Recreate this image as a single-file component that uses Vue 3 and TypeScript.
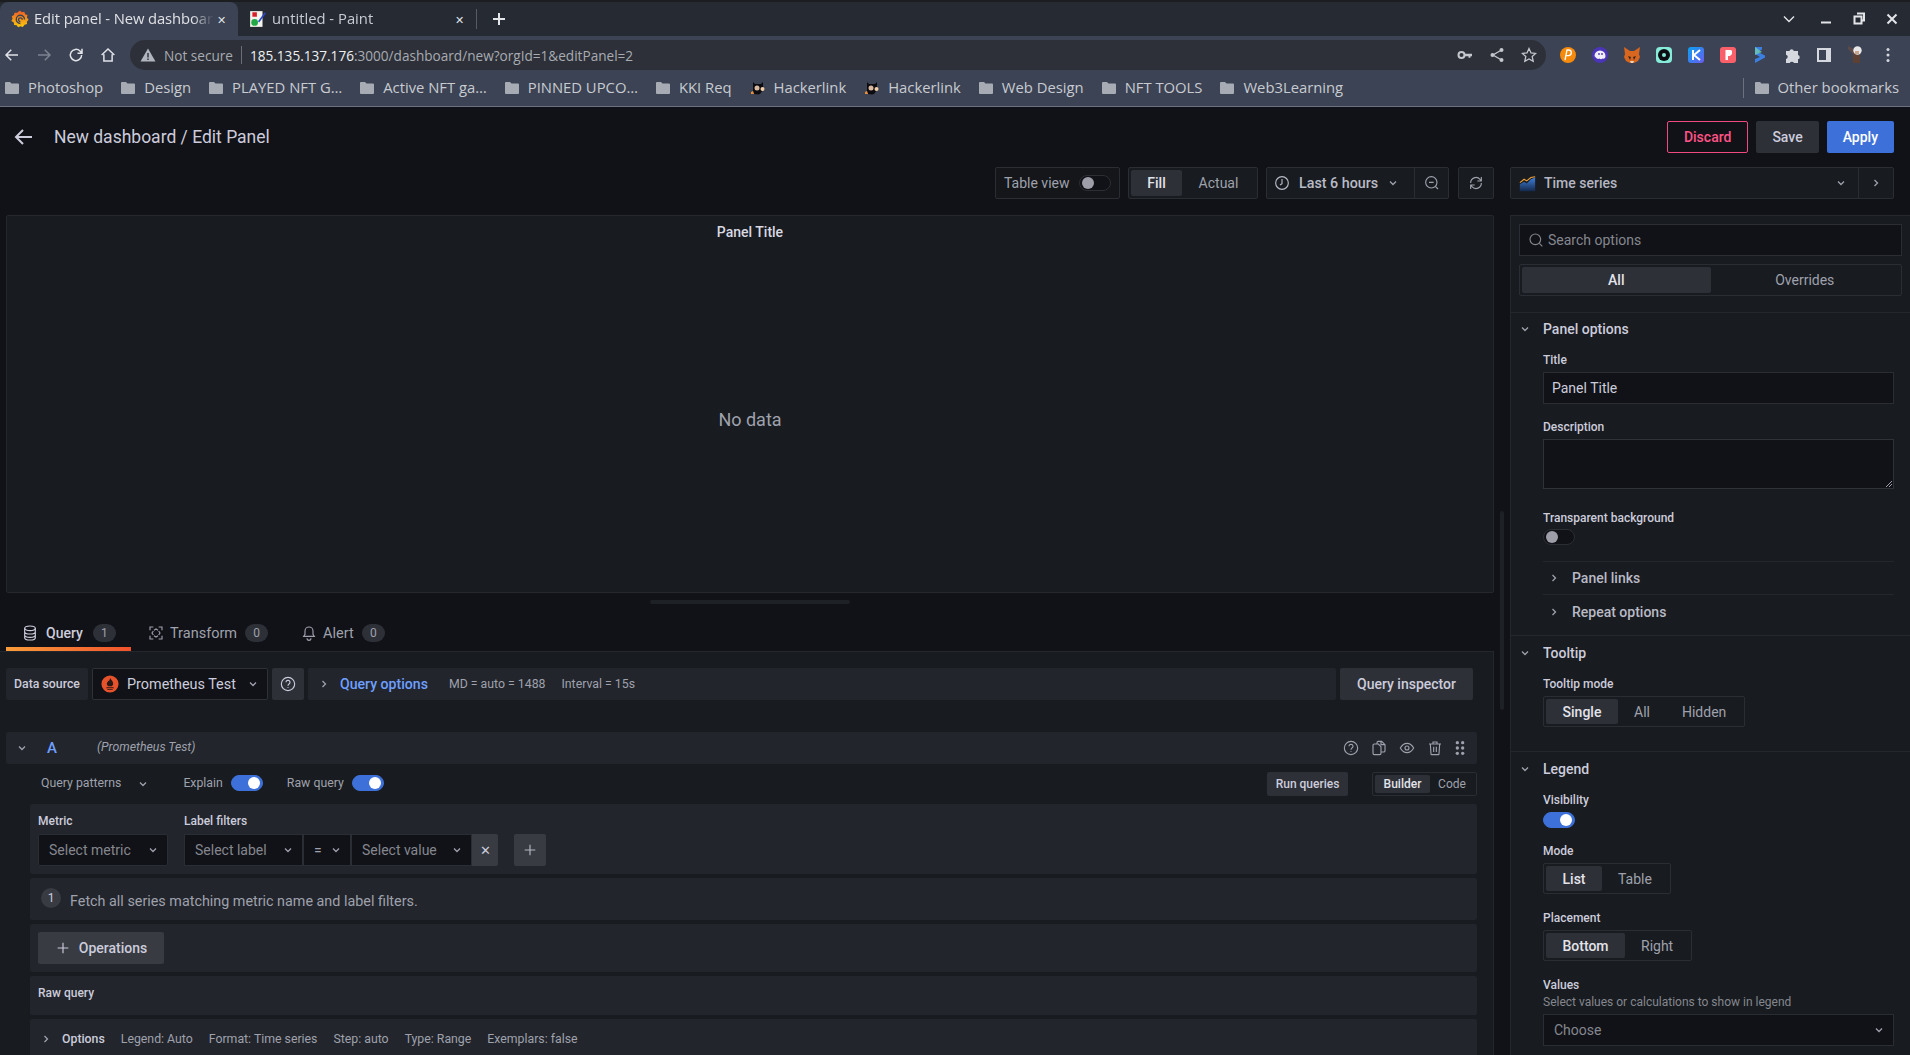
<template>
  <div class="screen">
    <!-- browser chrome -->
    <div class="tabstrip">
      <div class="tab tab--active">
        <svg class="favicon" viewBox="0 0 24 24">
          <defs>
            <linearGradient id="gf" x1="0" y1="0" x2="0" y2="1">
              <stop offset="0" stop-color="#f05a28" />
              <stop offset="1" stop-color="#fbca0a" />
            </linearGradient>
          </defs>
          <path fill="url(#gf)" d="M12 .5l2.400 2.600 3.400-.8 1 3.200 3.200 1.200-.8 3.300 2.300 3-2.400 2.500.4 3.300-3.400.7-2.300 3.100-3.300-.8-3 1.200-2-2.700-3.400-.3-.3-3.400L.5 14.500l1.600-3-1.100-3.200 3-1.500.7-3.300 3.400.2z" />
          <path d="M18 12.500a5.500 5.500 0 1 0-5.500 5.500M15 13a2.500 2.500 0 1 0-2.500 2.500" fill="none" stroke="#3c4354" stroke-width="1.800" />
        </svg>
        <span class="tab-title">Edit panel - New dashboar</span>
        <span class="tab-close">✕</span>
      </div>
      <div class="tab">
        <svg class="favicon" viewBox="0 0 16 16">
          <rect x="1" y="1" width="11" height="14" fill="#f4f4ee" />
          <rect x="3" y="2" width="4" height="4" fill="#d8202a" />
          <circle cx="5" cy="11" r="3" fill="#23a848" />
          <path d="M8 10l6-8 1 1-6 8z" fill="#2c46c8" />
        </svg>
        <span class="tab-title tab-title--dim">untitled - Paint</span>
        <span class="tab-close">✕</span>
      </div>
      <div class="tab-sep" />
      <svg class="new-tab" viewBox="0 0 14 14"><path d="M7 1v12M1 7h12" /></svg>
      <div class="win-controls">
        <svg class="win-down" viewBox="0 0 14 14"><path d="M2 4.500l5 5 5-5" /></svg>
        <svg class="win-ico" viewBox="0 0 14 14"><path d="M2 10.500h10" stroke-width="2" /></svg>
        <svg class="win-ico" viewBox="0 0 14 14"><path d="M5 1.500h7v7h-2M2.500 4.500h7v7h-7z" stroke-width="2" /></svg>
        <svg class="win-ico" viewBox="0 0 14 14"><path d="M2.500 2.500l9 9M11.500 2.500l-9 9" stroke-width="2" /></svg>
      </div>
    </div>

    <div class="toolbar">
      <div class="nav-btns">
        <svg viewBox="0 0 24 24"><path d="M20 12H5M11 5l-7 7 7 7" /></svg>
        <svg class="nav-off" viewBox="0 0 24 24"><path d="M4 12h15M13 5l7 7-7 7" /></svg>
        <svg viewBox="0 0 24 24"><path d="M19.500 12a7.500 7.500 0 1 1-2.200-5.300L20 9.500M20 3.500v6h-6" /></svg>
        <svg viewBox="0 0 24 24"><path d="M3.500 12L12 4l8.500 8M6.500 11v9h11v-9" /></svg>
      </div>
      <div class="omnibox">
        <svg class="warn" viewBox="0 0 16 16"><path d="M8 1.500L15.500 14.500H.5z" fill="#b1b5bd" /><path d="M8 6v4.500M8 11.500v1.500" stroke="#2d3038" stroke-width="1.400" /></svg>
        <span class="not-secure">Not secure</span>
        <span class="omni-sep" />
        <span class="url"><b>185.135.137.176</b>:3000/dashboard/new?orgId=1&amp;editPanel=2</span>
        <div class="omni-icons">
          <svg viewBox="0 0 16 16"><circle cx="4.500" cy="8" r="3" fill="none" stroke="#c4c7cd" stroke-width="2" /><path d="M7 6.800h8v2.500h-1.500v1.500h-2V9.300H7z" fill="#c4c7cd" /></svg>
          <svg viewBox="0 0 16 16"><path d="M12.500 3L4 8l8.500 5" fill="none" stroke="#c4c7cd" stroke-width="1.300" /><circle cx="12.500" cy="3" r="2" fill="#c4c7cd" /><circle cx="3.500" cy="8" r="2" fill="#c4c7cd" /><circle cx="12.500" cy="13" r="2" fill="#c4c7cd" /></svg>
          <svg viewBox="0 0 16 16"><path d="M8 1.500l2 4.400 4.700.5-3.500 3.200 1 4.700L8 11.900l-4.200 2.400 1-4.700L1.300 6.400 6 5.900z" fill="none" stroke="#c4c7cd" stroke-width="1.300" /></svg>
        </div>
      </div>
      <div class="extensions">
        <svg viewBox="0 0 20 20"><circle cx="10" cy="10" r="8" fill="#f68a0c" /><path d="M7 15l2-10h1.500a2.800 2.800 0 0 1 0 5.600H8.500" fill="none" stroke="#fff" stroke-width="1.300" /></svg>
        <svg viewBox="0 0 20 20"><circle cx="10" cy="10" r="8" fill="#4b35b8" /><path d="M4.500 11a5.500 5.500 0 0 1 11 0c0 2.500-1.500 3-3 2.500-1 1-2 1-3 0-1 .8-3 .5-5-2.500z" fill="#f2eefc" /><circle cx="9" cy="9" r=".9" fill="#4b35b8" /><circle cx="12" cy="9" r=".9" fill="#4b35b8" /></svg>
        <svg viewBox="0 0 20 20"><path d="M2 2l6 4h4l6-4-1 7 1 3-2 4-4 2H8l-4-2-2-4 1-3z" fill="#d9661f" /><path d="M6 11l3 1-1 3zM14 11l-3 1 1 3z" fill="#33261e" /><path d="M8 16h4l-1 2H9z" fill="#e8d6c2" /></svg>
        <svg viewBox="0 0 20 20"><rect x="2" y="2" width="16" height="16" rx="4" fill="#86ecd9" /><circle cx="10" cy="10" r="6" fill="#0b0f14" /><circle cx="10" cy="10" r="2" fill="#86ecd9" /></svg>
        <svg viewBox="0 0 20 20"><defs><linearGradient id="kk" x1="0" y1="0" x2="1" y2="1"><stop offset="0" stop-color="#0aa2ee" /><stop offset="1" stop-color="#6a5cf0" /></linearGradient></defs><rect x="2" y="2" width="16" height="16" rx="3" fill="url(#kk)" /><path d="M7 5v10M14 5l-6 5 6 5" fill="none" stroke="#fff" stroke-width="2" /></svg>
        <svg viewBox="0 0 20 20"><rect x="2" y="2" width="16" height="16" rx="3" fill="#f9606a" /><path d="M7.500 15V5H13l1 1v3l-2 2H10v4z" fill="#fff" /></svg>
        <svg viewBox="0 0 20 20"><path d="M5 2h7v2.500L8 7l7 3.500v2L5 18v-4l5-2-5-3z" fill="#3b7fe0" /><path d="M5 2l7 5-7 3z" fill="#6ecdb6" opacity=".8" /></svg>
        <svg viewBox="0 0 20 20"><path d="M4 6h3.500a2.200 2.200 0 0 1 4.300 0H16v4a2.200 2.200 0 0 1 0 4.300V18h-4a2.300 2.300 0 0 0-4.200 0H4v-4a2.200 2.200 0 0 0 0-4.300z" fill="#d5d8df" /></svg>
        <svg viewBox="0 0 20 20"><rect x="3" y="3" width="14" height="14" fill="#d5d8df" /><rect x="5" y="5" width="7" height="10" fill="#3c4354" /></svg>
        <svg viewBox="0 0 20 20"><path d="M2 1l6 3 1 4-2 1-5-5z" fill="#5c4a48" /><rect x="7" y="9" width="7" height="9" fill="#5b4033" /><circle cx="11.500" cy="5.500" r="4.200" fill="#e8e8ea" /><rect x="9" y="6" width="4" height="3" fill="#c9a58c" /></svg>
        <svg viewBox="0 0 20 20"><circle cx="10" cy="4.500" r="1.500" fill="#d5d8df" /><circle cx="10" cy="10" r="1.500" fill="#d5d8df" /><circle cx="10" cy="15.500" r="1.500" fill="#d5d8df" /></svg>
      </div>
    </div>

    <div class="bookmarks">
      <div v-for="b in bookmarks" :key="b.id" class="bookmark">
        <svg v-if="b.cat" class="cat" viewBox="0 0 16 16"><path d="M3 2l2 2h6l2-2v8l-3 4-2 .5L4 14l-1-3z" fill="#0c0c10" /><circle cx="7" cy="8" r="2.500" fill="#d9b8a0" /><circle cx="12.500" cy="9" r="2" fill="#f3cfa8" /><path d="M1 12l2-1 1 3H1z" fill="#e98f3c" /></svg>
        <svg v-else class="folder" viewBox="0 0 14 12"><path d="M0 1a1 1 0 0 1 1-1h4l1.500 1.500H13a1 1 0 0 1 1 1V11a1 1 0 0 1-1 1H1a1 1 0 0 1-1-1z" /></svg>
        <span>{{ b.label }}</span>
      </div>
      <div class="bm-right">
        <span class="bm-sep" />
        <div class="bookmark">
          <svg class="folder" viewBox="0 0 14 12"><path d="M0 1a1 1 0 0 1 1-1h4l1.500 1.500H13a1 1 0 0 1 1 1V11a1 1 0 0 1-1 1H1a1 1 0 0 1-1-1z" /></svg>
          <span>Other bookmarks</span>
        </div>
      </div>
    </div>

    <!-- grafana page -->
    <div class="page">
      <header class="page-head">
        <svg class="back" viewBox="0 0 24 24"><path d="M20 12H5M11 5l-7 7 7 7" /></svg>
        <h1>New dashboard / Edit Panel</h1>
        <div class="head-actions">
          <button class="btn btn--outline">Discard</button>
          <button class="btn btn--grey">Save</button>
          <button class="btn btn--blue">Apply</button>
        </div>
      </header>

      <div class="editor">
        <section class="left">
          <div class="view-bar">
            <div class="tb-box tb-table">
              <span>Table view</span>
              <span class="switch" />
            </div>
            <div class="seg seg--bar">
              <span class="seg-item seg-item--on seg-fill">Fill</span>
              <span class="seg-item seg-actual">Actual</span>
            </div>
            <div class="tb-box tb-time">
              <div class="tb-time-main">
                <svg class="ico16" viewBox="0 0 24 24"><circle cx="12" cy="12" r="9.500" /><path d="M12 6v7l-3 2" /></svg>
                <span>Last 6 hours</span>
                <svg class="chev" viewBox="0 0 12 12"><path d="M3 4.500L6 7.500 9 4.500" /></svg>
              </div>
              <div class="tb-time-zoom">
                <svg class="ico16" viewBox="0 0 24 24"><circle cx="11" cy="11" r="8.500" /><path d="M7.500 11h7M17 17l4 4" /></svg>
              </div>
            </div>
            <div class="tb-box tb-refresh">
              <svg class="ico16" viewBox="0 0 24 24"><path d="M4 12a8 8 0 0 1 14-5.500L20 9M20 3v6h-6M20 12a8 8 0 0 1-14 5.500L4 15M4 21v-6h6" /></svg>
            </div>
          </div>

          <div class="panel">
            <div class="panel-title">Panel Title</div>
            <div class="panel-empty">No data</div>
          </div>

          <div class="splitter"><span /></div>

          <div class="q-tabs">
            <div class="q-tab q-tab--on">
              <svg class="ico16" viewBox="0 0 24 24"><ellipse cx="12" cy="5" rx="8" ry="3.500" /><path d="M4 5v14c0 2 3.500 3.500 8 3.500s8-1.500 8-3.500V5M4 10c0 2 3.500 3.500 8 3.500s8-1.500 8-3.500M4 15c0 2 3.500 3.500 8 3.500s8-1.500 8-3.500" /></svg>
              <span>Query</span>
              <span class="count">1</span>
            </div>
            <div class="q-tab q-tab--transform">
              <svg class="ico16" viewBox="0 0 24 24"><path d="M3 8V3h5M16 3h5v5M21 16v5h-5M8 21H3v-5M9 8l3-2 3 2M16 9l2 3-2 3M15 16l-3 2-3-2M8 15l-2-3 2-3" /></svg>
              <span>Transform</span>
              <span class="count">0</span>
            </div>
            <div class="q-tab q-tab--alert">
              <svg class="ico16" viewBox="0 0 24 24"><path d="M12 3a6 6 0 0 0-6 6v5l-2 3h16l-2-3V9a6 6 0 0 0-6-6zM9 20a3 3 0 0 0 6 0" /></svg>
              <span>Alert</span>
              <span class="count">0</span>
            </div>
          </div>

          <div class="q-pane">
            <div class="ds-row">
              <span class="ds-label">Data source</span>
              <div class="ds-select">
                <svg class="prom" viewBox="0 0 20 20"><circle cx="10" cy="10" r="9.500" fill="#e6522c" /><path d="M10 3c1 2.500 3.500 3.500 3.500 6.500 0 1.500-.8 2.500-1.500 3H8c-.7-.5-1.500-1.500-1.500-3C6.500 8 8 8 8 6.500 9 7 10 5 10 3z" fill="#2a1a16" /><path d="M6 13.500h8v1.200H6zM7 15.700h6v1H7z" fill="#2a1a16" /></svg>
                <span>Prometheus Test</span>
                <svg class="chev" viewBox="0 0 12 12"><path d="M3 4.500L6 7.500 9 4.500" /></svg>
              </div>
              <div class="ds-help">
                <svg class="ico16" viewBox="0 0 24 24"><circle cx="12" cy="12" r="10" /><path d="M9 9.500a3 3 0 1 1 4.500 2.600c-1 .6-1.500 1-1.500 2.400M12 17v1" /></svg>
              </div>
              <div class="ds-options">
                <svg class="chev chev--right" viewBox="0 0 12 12"><path d="M4.500 3L7.500 6 4.500 9" /></svg>
                <span class="ds-options-title">Query options</span>
                <span class="ds-meta">MD = auto = 1488</span>
                <span class="ds-meta">Interval = 15s</span>
              </div>
              <button class="btn btn--grey btn--inspector">Query inspector</button>
            </div>

            <div class="q-head">
              <svg class="chev" viewBox="0 0 12 12"><path d="M3 4.500L6 7.500 9 4.500" /></svg>
              <span class="q-letter">A</span>
              <span class="q-ds">(Prometheus Test)</span>
              <div class="q-head-icons">
                <svg viewBox="0 0 24 24"><circle cx="12" cy="12" r="10" /><path d="M9 9.500a3 3 0 1 1 4.500 2.600c-1 .6-1.500 1-1.500 2.400M12 17v1" /></svg>
                <svg viewBox="0 0 24 24"><path d="M9 6V4a2 2 0 0 1 2-2h5l5 5v9a2 2 0 0 1-2 2h-3M15 2v5h6M5 6h6l4 4v10a2 2 0 0 1-2 2H5a2 2 0 0 1-2-2V8a2 2 0 0 1 2-2z" /></svg>
                <svg viewBox="0 0 24 24"><path d="M2 12c2.500-4.500 6-7 10-7s7.500 2.500 10 7c-2.500 4.500-6 7-10 7s-7.500-2.500-10-7z" /><circle cx="12" cy="12" r="3" /></svg>
                <svg viewBox="0 0 24 24"><path d="M3 6h18M9 6V3h6v3M5 6l1 15a1 1 0 0 0 1 1h10a1 1 0 0 0 1-1l1-15M10 10v8M14 10v8" /></svg>
                <svg class="drag" viewBox="0 0 24 24"><circle cx="8" cy="4" r="2.500" /><circle cx="16" cy="4" r="2.500" /><circle cx="8" cy="12" r="2.500" /><circle cx="16" cy="12" r="2.500" /><circle cx="8" cy="20" r="2.500" /><circle cx="16" cy="20" r="2.500" /></svg>
              </div>
            </div>

            <div class="q-tools">
              <span class="q-patterns">Query patterns</span>
              <svg class="chev" viewBox="0 0 12 12"><path d="M3 4.500L6 7.500 9 4.500" /></svg>
              <span class="q-explain">Explain</span>
              <span class="switch switch--on" />
              <span class="q-raw">Raw query</span>
              <span class="switch switch--on" />
              <button class="btn btn--grey btn--run">Run queries</button>
              <div class="seg seg--small">
                <span class="seg-item seg-item--on seg-builder">Builder</span>
                <span class="seg-item seg-code">Code</span>
              </div>
            </div>

            <div class="qb">
              <div class="qb-row qb-row--filters">
                <div class="qb-field">
                  <label>Metric</label>
                  <div class="select qb-metric">
                    <span>Select metric</span>
                    <svg class="chev" viewBox="0 0 12 12"><path d="M3 4.500L6 7.500 9 4.500" /></svg>
                  </div>
                </div>
                <div class="qb-field">
                  <label>Label filters</label>
                  <div class="qb-filters">
                    <div class="select qb-label">
                      <span>Select label</span>
                      <svg class="chev" viewBox="0 0 12 12"><path d="M3 4.500L6 7.500 9 4.500" /></svg>
                    </div>
                    <div class="select qb-op">
                      <span>=</span>
                      <svg class="chev" viewBox="0 0 12 12"><path d="M3 4.500L6 7.500 9 4.500" /></svg>
                    </div>
                    <div class="select qb-value">
                      <span>Select value</span>
                      <svg class="chev" viewBox="0 0 12 12"><path d="M3 4.500L6 7.500 9 4.500" /></svg>
                    </div>
                    <div class="qb-x">✕</div>
                    <div class="qb-plus">
                      <svg class="ico16" viewBox="0 0 24 24"><path d="M12 4v16M4 12h16" /></svg>
                    </div>
                  </div>
                </div>
              </div>
              <div class="qb-row qb-row--hint">
                <span class="hint-num">1</span>
                <span>Fetch all series matching metric name and label filters.</span>
              </div>
              <div class="qb-row qb-row--ops">
                <button class="btn btn--grey btn--ops">
                  <svg class="ico16" viewBox="0 0 24 24"><path d="M12 4v16M4 12h16" /></svg>
                  Operations
                </button>
              </div>
              <div class="qb-row qb-row--raw">Raw query</div>
              <div class="qb-row qb-row--opts">
                <svg class="chev" viewBox="0 0 12 12"><path d="M4.500 3L7.500 6 4.500 9" /></svg>
                <strong>Options</strong>
                <span v-for="o in queryOpts" :key="o">{{ o }}</span>
              </div>
            </div>
          </div>
        </section>

        <div class="gutter"><span /></div>

        <aside class="right">
          <div class="viz-picker">
            <div class="viz-main">
              <svg class="viz-ico" viewBox="0 0 20 20">
                <defs>
                  <linearGradient id="ts" x1="0" y1="0" x2="0" y2="1">
                    <stop offset="0" stop-color="#3f7fd8" />
                    <stop offset="1" stop-color="#14294d" />
                  </linearGradient>
                </defs>
                <path d="M1 11l5-3 3 2 5-5 5-2v16H1z" fill="url(#ts)" />
                <path d="M1 9l5-4 3 2 5-4 5-1" fill="none" stroke="#f2a33a" stroke-width="1.200" />
              </svg>
              <span>Time series</span>
              <svg class="chev" viewBox="0 0 12 12"><path d="M3 4.500L6 7.500 9 4.500" /></svg>
            </div>
            <div class="viz-toggle">
              <svg class="chev" viewBox="0 0 12 12"><path d="M4.500 3L7.500 6 4.500 9" /></svg>
            </div>
          </div>

          <div class="opts">
            <div class="opts-top">
              <div class="search">
                <svg class="ico16" viewBox="0 0 24 24"><circle cx="11" cy="11" r="8" /><path d="M17 17l4.500 4.500" /></svg>
                <span>Search options</span>
              </div>
              <div class="seg seg--wide">
                <span class="seg-item seg-item--on">All</span>
                <span class="seg-item">Overrides</span>
              </div>
            </div>

            <div class="group group--panel">
              <div class="group-title group-title--first">
                <svg class="chev" viewBox="0 0 12 12"><path d="M3 4.500L6 7.500 9 4.500" /></svg>
                Panel options
              </div>
              <label class="f-label f-label--title">Title</label>
              <div class="input">Panel Title</div>
              <label class="f-label f-label--desc">Description</label>
              <div class="textarea">
                <svg class="grip" viewBox="0 0 8 8"><path d="M7 1L1 7M7 4L4 7" /></svg>
              </div>
              <label class="f-label f-label--transp">Transparent background</label>
              <span class="switch switch--block" />
              <div class="sub sub--first">
                <svg class="chev" viewBox="0 0 12 12"><path d="M4.500 3L7.500 6 4.500 9" /></svg>
                Panel links
              </div>
              <div class="sub">
                <svg class="chev" viewBox="0 0 12 12"><path d="M4.500 3L7.500 6 4.500 9" /></svg>
                Repeat options
              </div>
            </div>

            <div class="group group--tooltip">
              <div class="group-title">
                <svg class="chev" viewBox="0 0 12 12"><path d="M3 4.500L6 7.500 9 4.500" /></svg>
                Tooltip
              </div>
              <label class="f-label">Tooltip mode</label>
              <div class="seg seg--radio">
                <span class="seg-item seg-item--on r-single">Single</span>
                <span class="seg-item r-all">All</span>
                <span class="seg-item r-hidden">Hidden</span>
              </div>
            </div>

            <div class="group group--legend">
              <div class="group-title">
                <svg class="chev" viewBox="0 0 12 12"><path d="M3 4.500L6 7.500 9 4.500" /></svg>
                Legend
              </div>
              <label class="f-label">Visibility</label>
              <span class="switch switch--on switch--block" />
              <label class="f-label f-label--mode">Mode</label>
              <div class="seg seg--radio">
                <span class="seg-item seg-item--on r-list">List</span>
                <span class="seg-item r-table">Table</span>
              </div>
              <label class="f-label f-label--place">Placement</label>
              <div class="seg seg--radio">
                <span class="seg-item seg-item--on r-bottom">Bottom</span>
                <span class="seg-item r-right">Right</span>
              </div>
              <label class="f-label f-label--values">Values</label>
              <div class="f-desc">Select values or calculations to show in legend</div>
              <div class="input input--select">
                <span>Choose</span>
                <svg class="chev" viewBox="0 0 12 12"><path d="M3 4.500L6 7.500 9 4.500" /></svg>
              </div>
            </div>
          </div>
        </aside>
      </div>
    </div>
  </div>
</template>

<script setup lang="ts">
interface Bookmark {
  id: number
  label: string
  cat?: boolean
}

const bookmarks: Bookmark[] = [
  { id: 1, label: 'Photoshop' },
  { id: 2, label: 'Design' },
  { id: 3, label: 'PLAYED NFT G…' },
  { id: 4, label: 'Active NFT ga…' },
  { id: 5, label: 'PINNED UPCO…' },
  { id: 6, label: 'KKI Req' },
  { id: 7, label: 'Hackerlink', cat: true },
  { id: 8, label: 'Hackerlink', cat: true },
  { id: 9, label: 'Web Design' },
  { id: 10, label: 'NFT TOOLS' },
  { id: 11, label: 'Web3Learning' }
]

const queryOpts = ['Legend: Auto', 'Format: Time series', 'Step: auto', 'Type: Range', 'Exemplars: false']
</script>

<style>
html,
body {
  margin: 0;
  background: #111217;
  overflow: hidden;
}
</style>

<style scoped>
.screen {
  width: 1910px;
  height: 1055px;
  overflow: hidden;
  background: #111217;
  font-family: Roboto, "Liberation Sans", sans-serif;
  font-size: 14px;
  color: #ccccdc;
  display: flex;
  flex-direction: column;
}

button {
  font-family: inherit;
  border: none;
}

svg {
  flex-shrink: 0;
}

/* browser chrome */
.tabstrip {
  height: 34px;
  border-top: 2px solid #1c1d20;
  background: #262a33;
  display: flex;
  align-items: center;
  font-family: "Open Sans", "Noto Sans", sans-serif;
  font-size: 14.8px;
  color: #dfe1e5;
}

.tab {
  width: 238px;
  height: 100%;
  box-sizing: border-box;
  padding: 0 10px 0 11px;
  display: flex;
  align-items: center;
}

.tab--active {
  background: #3c4354;
  border-radius: 8px 8px 0 0;
}

.tab--active .tab-title {
  letter-spacing: -0.1px;
}

.favicon {
  width: 18px;
  height: 18px;
  margin-right: 5px;
}

.tab-title {
  flex: 1;
  overflow: hidden;
  white-space: nowrap;
  margin-top: -2px;
  -webkit-mask-image: linear-gradient(to right, #000 88%, transparent);
  mask-image: linear-gradient(to right, #000 88%, transparent);
}

.tab-title--dim {
  color: #c8cbd1;
}

.tab-close {
  font-size: 11px;
  width: 14px;
  text-align: center;
}

.tab-sep {
  width: 1px;
  height: 20px;
  background: #565b66;
}

.new-tab {
  width: 14px;
  height: 14px;
  margin-left: 15px;
  fill: none;
  stroke: #e3e5e9;
  stroke-width: 2;
}

.win-controls {
  margin-left: auto;
  display: flex;
  align-items: center;
  gap: 19px;
  padding-right: 11px;
}

.win-controls svg {
  width: 14px;
  height: 14px;
  fill: none;
  stroke: #e3e5e9;
}

.win-down {
  margin-right: 4px;
  stroke-width: 1.4;
}

.toolbar {
  height: 34px;
  background: #3c4354;
  display: flex;
  align-items: flex-end;
  font-family: "Open Sans", "Noto Sans", sans-serif;
  font-size: 13.6px;
}

.nav-btns {
  width: 130px;
  height: 30px;
  box-sizing: border-box;
  padding-left: 3px;
  display: flex;
  align-items: center;
  gap: 14px;
}

.nav-btns svg {
  width: 18px;
  height: 18px;
  fill: none;
  stroke: #dfe2e8;
  stroke-width: 2;
}

.nav-btns .nav-off {
  stroke: #7c8290;
}

.omnibox {
  width: 1416px;
  height: 30px;
  box-sizing: border-box;
  padding: 0 9px 0 10px;
  border-radius: 15px;
  background: #2d3038;
  display: flex;
  align-items: center;
}

.warn {
  width: 16px;
  height: 16px;
  margin-right: 8px;
}

.not-secure {
  color: #a8abb2;
}

.omni-sep {
  width: 1px;
  height: 18px;
  margin: 0 8px;
  background: #6a6e77;
}

.url {
  color: #a8abb2;
}

.url b {
  color: #eef0f3;
  font-weight: 400;
}

.omni-icons {
  margin-left: auto;
  display: flex;
  gap: 16px;
}

.omni-icons svg {
  width: 16px;
  height: 16px;
}

.extensions {
  height: 30px;
  padding-left: 12px;
  display: flex;
  align-items: center;
  gap: 12px;
}

.extensions svg {
  width: 20px;
  height: 20px;
}

.bookmarks {
  height: 36px;
  background: #3c4354;
  border-bottom: 1px solid #6b7180;
  display: flex;
  align-items: center;
  padding-left: 5px;
  gap: 18px;
  font-family: "Open Sans", "Noto Sans", sans-serif;
  font-size: 14.8px;
  color: #c8cbd1;
}

.bookmark {
  display: flex;
  align-items: center;
  gap: 9px;
  white-space: nowrap;
}

.bookmark span {
  margin-top: -2px;
}

.folder {
  width: 14px;
  height: 12px;
  fill: #a7abb3;
}

.cat {
  width: 16px;
  height: 16px;
  margin-right: -1px;
}

.bm-right {
  margin-left: auto;
  display: flex;
  align-items: center;
  padding-right: 11px;
}

.bm-sep {
  width: 1px;
  height: 20px;
  background: #6b7180;
  margin-right: 11px;
}

/* grafana page */
.page {
  flex: 1;
  min-height: 0;
  display: flex;
  flex-direction: column;
}

.page-head {
  height: 32px;
  padding: 14px 16px 14px 12px;
  display: flex;
  align-items: center;
}

.back {
  width: 24px;
  height: 24px;
  margin-right: 18px;
  fill: none;
  stroke: #ccccdc;
  stroke-width: 2;
}

h1 {
  margin: 0;
  font-size: 17.5px;
  font-weight: 400;
  color: #ccccdc;
}

.head-actions {
  margin-left: auto;
  display: flex;
  gap: 8px;
}

.btn {
  height: 32px;
  padding: 0 16px;
  border-radius: 2px;
  font-size: 14px;
  font-weight: 500;
  display: flex;
  align-items: center;
  white-space: nowrap;
}

.btn--outline {
  background: transparent;
  border: 1px solid #f0497f;
  color: #ff5286;
}

.btn--grey {
  background: #2d3037;
  color: #ccccdc;
}

.btn--blue {
  background: #3d71d9;
  color: #fff;
}

.editor {
  flex: 1;
  min-height: 0;
  display: flex;
}

.left {
  width: 1494px;
  flex-shrink: 0;
  display: flex;
  flex-direction: column;
}

.gutter {
  width: 16px;
  padding-top: 344px;
  box-sizing: border-box;
  display: flex;
  justify-content: center;
  flex-shrink: 0;
}

.gutter span {
  width: 4px;
  height: 199px;
  border-radius: 2px;
  background: #1e2125;
}

.view-bar {
  height: 32px;
  display: flex;
  justify-content: flex-end;
  gap: 8px;
  color: #9fa1ad;
}

.tb-box {
  box-sizing: border-box;
  height: 32px;
  border: 1px solid #2a2d33;
  border-radius: 2px;
  background: #181b1f;
  display: flex;
  align-items: center;
}

.tb-table {
  width: 125px;
  padding: 0 8px;
  justify-content: space-between;
  background: #14161a;
}

.switch {
  width: 32px;
  height: 16px;
  box-sizing: border-box;
  border: 1px solid #2b2e33;
  border-radius: 8px;
  background: #111217;
  display: inline-block;
  position: relative;
}

.switch::after {
  content: "";
  width: 12px;
  height: 12px;
  border-radius: 50%;
  background: #9d9ea8;
  position: absolute;
  left: 2px;
  top: 1px;
}

.switch--on {
  background: #3d71d9;
  border-color: #3d71d9;
}

.switch--on::after {
  left: auto;
  right: 2px;
  background: #fff;
}

.switch--block {
  display: block;
}

.seg {
  box-sizing: border-box;
  border: 1px solid #2a2d33;
  border-radius: 2px;
  padding: 2px;
  display: flex;
  color: #9fa1ad;
}

.seg--bar {
  width: 130px;
  height: 32px;
  background: #181b1f;
}

.seg-item {
  display: flex;
  align-items: center;
  justify-content: center;
  border-radius: 2px;
}

.seg-item--on {
  background: #2d3037;
  color: #e3e3ea;
  font-weight: 500;
}

.seg-fill {
  width: 51px;
}

.seg-actual {
  flex: 1;
}

.tb-time {
  width: 183px;
}

.tb-time-main {
  width: 148px;
  height: 100%;
  box-sizing: border-box;
  padding: 0 8px 0 7px;
  display: flex;
  align-items: center;
  gap: 9px;
  border-right: 1px solid #2a2d33;
  color: #b9bbc7;
  font-size: 14.3px;
  font-weight: 500;
}

.tb-time-main .chev {
  margin-left: 0;
}

.tb-time-zoom {
  flex: 1;
  display: flex;
  justify-content: center;
}

.tb-refresh {
  width: 36px;
  margin-left: 1px;
  justify-content: center;
}

.ico16 {
  width: 16px;
  height: 16px;
  fill: none;
  stroke: currentColor;
  stroke-width: 1.7;
}

.chev {
  width: 12px;
  height: 12px;
  fill: none;
  stroke: #9fa1ad;
  stroke-width: 1.3;
}

.panel {
  height: 378px;
  margin: 16px 0 0 6px;
  box-sizing: border-box;
  border: 1px solid #24272c;
  border-radius: 2px;
  background: #181b1f;
  display: flex;
  flex-direction: column;
  flex-shrink: 0;
}

.panel-title {
  height: 32px;
  display: flex;
  align-items: center;
  justify-content: center;
  font-weight: 500;
  color: #d8d9e3;
}

.panel-empty {
  flex: 1;
  display: flex;
  align-items: center;
  justify-content: center;
  padding-bottom: 2px;
  font-size: 18px;
  color: #9fa1ad;
}

.splitter {
  height: 19px;
  padding-top: 7px;
  box-sizing: border-box;
  display: flex;
  justify-content: center;
  padding-left: 6px;
  flex-shrink: 0;
}

.splitter span {
  width: 200px;
  height: 4px;
  border-radius: 2px;
  background: #1e2125;
}

.q-tabs {
  height: 39px;
  padding-left: 6px;
  display: flex;
  color: #9fa1ad;
  flex-shrink: 0;
}

.q-tab {
  display: flex;
  align-items: center;
  gap: 6px;
  box-sizing: border-box;
  padding-top: 3px;
}

.q-tab--on {
  width: 125px;
  padding-left: 16px;
  padding-top: 7px;
  gap: 8px;
  color: #ccccdc;
  font-weight: 500;
  border-bottom: 4px solid transparent;
  border-image: linear-gradient(90deg, #f99d3a, #f0522c) 1;
}

.q-tab--transform {
  margin-left: 17px;
  gap: 6px;
  font-size: 14.500px;
}

.q-tab--alert {
  margin-left: 33px;
  font-size: 14.500px;
}

.q-tab .count {
  margin-left: 2px;
}

.count {
  width: 23px;
  height: 18px;
  border-radius: 9px;
  background: #2d3037;
  font-size: 12px;
  font-weight: 400;
  display: flex;
  align-items: center;
  justify-content: center;
  color: #9fa1ad;
}

.q-pane {
  flex: 1;
  min-height: 0;
  background: #181b1f;
  border: 1px solid #24272c;
  border-width: 1px 1px 0 0;
  padding: 16px 16px 0 6px;
}

.ds-row {
  height: 32px;
  display: flex;
  gap: 4px;
  padding-right: 4px;
}

.ds-label {
  width: 82px;
  border-radius: 2px;
  background: #22252b;
  display: flex;
  align-items: center;
  justify-content: center;
  font-size: 12.3px;
  font-weight: 500;
}

.ds-select {
  width: 176px;
  box-sizing: border-box;
  border: 1px solid #2e3136;
  border-radius: 2px;
  background: #111217;
  padding: 0 8px;
  display: flex;
  align-items: center;
  font-size: 14.4px;
}

.prom {
  width: 18px;
  height: 18px;
  margin-right: 8px;
}

.ds-select .chev {
  margin-left: auto;
}

.ds-help {
  width: 32px;
  border-radius: 2px;
  background: #2d3037;
  display: flex;
  align-items: center;
  justify-content: center;
}

.ds-options {
  flex: 1;
  border-radius: 2px;
  background: #22252b;
  padding-left: 10px;
  display: flex;
  align-items: center;
  font-size: 12.3px;
  color: #9fa1ad;
}

.ds-options-title {
  margin: 0 21px 0 10px;
  font-size: 14.1px;
  font-weight: 500;
  color: #6e9fff;
}

.ds-meta {
  margin-right: 16px;
}

.btn--inspector {
  width: 133px;
  padding: 0;
  justify-content: center;
}

.q-head {
  height: 32px;
  margin-top: 32px;
  border-radius: 2px;
  background: #22252b;
  display: flex;
  align-items: center;
  padding-left: 10px;
}

.q-letter {
  margin-left: 19px;
  font-size: 15px;
  font-weight: 500;
  color: #6e9fff;
}

.q-ds {
  margin-left: 40px;
  margin-top: -2px;
  font-size: 12.3px;
  font-style: italic;
  color: #9fa1ad;
}

.q-head-icons {
  margin-left: auto;
  display: flex;
  align-items: center;
  gap: 12px;
  padding-right: 9px;
  color: #9fa1ad;
}

.q-head-icons svg {
  width: 16px;
  height: 16px;
  fill: none;
  stroke: currentColor;
  stroke-width: 1.7;
}

.q-head-icons .drag {
  margin-left: -3px;
  fill: currentColor;
  stroke: none;
}

.q-tools {
  height: 24px;
  margin-top: 8px;
  display: flex;
  align-items: center;
  font-size: 12.3px;
  color: #9fa1ad;
}

.q-tools > span {
  margin-top: -2px;
}

.q-patterns {
  margin-left: 35px;
  margin-right: 16px;
}

.q-explain {
  margin-left: 34px;
  margin-right: 8px;
}

.q-raw {
  margin-left: 24px;
  margin-right: 8px;
}

.btn--run {
  height: 24px;
  width: 81px;
  margin-left: auto;
  padding: 0;
  justify-content: center;
  font-size: 12px;
}

.seg--small {
  width: 105px;
  height: 24px;
  margin-left: 24px;
  font-size: 12px;
}

.seg-builder {
  width: 55px;
}

.seg-code {
  flex: 1;
}

.qb {
  margin: 8px 0 0 24px;
  display: flex;
  flex-direction: column;
  gap: 4px;
}

.qb-row {
  border-radius: 2px;
  background: #22252b;
  box-sizing: border-box;
  padding-left: 8px;
}

.qb-row--filters {
  height: 70px;
  display: flex;
  gap: 16px;
  padding-top: 8px;
}

.qb-field label {
  display: block;
  height: 22px;
  font-size: 12px;
  font-weight: 500;
  line-height: 18px;
}

.qb-filters {
  display: flex;
}

.select {
  box-sizing: border-box;
  height: 32px;
  border: 1px solid #2a2d33;
  background: #111217;
  display: flex;
  align-items: center;
  justify-content: space-between;
  padding: 0 8px 0 10px;
  color: #85878f;
}

.qb-metric {
  width: 130px;
  border-radius: 2px;
}

.qb-label {
  width: 119px;
}

.qb-op {
  width: 48px;
  color: #9fa1ad;
}

.qb-value {
  width: 121px;
}

.qb-x {
  width: 26px;
  height: 32px;
  background: #383b42;
  border-radius: 0 2px 2px 0;
  display: flex;
  align-items: center;
  justify-content: center;
  font-size: 13px;
}

.qb-plus {
  width: 32px;
  height: 32px;
  margin-left: 16px;
  border-radius: 2px;
  background: #383b42;
  display: flex;
  align-items: center;
  justify-content: center;
  color: #b4b6c2;
}

.qb-row--hint {
  height: 42px;
  display: flex;
  align-items: center;
  padding: 4px 0 0 11px;
  gap: 9px;
  font-size: 14.35px;
  color: #9fa1ad;
}

.hint-num {
  width: 20px;
  height: 20px;
  margin-top: -6px;
  border-radius: 50%;
  background: #383b42;
  font-size: 12px;
  color: #ccccdc;
  display: flex;
  align-items: center;
  justify-content: center;
}

.qb-row--ops {
  height: 48px;
  padding-top: 8px;
}

.btn--ops {
  width: 126px;
  padding: 0;
  background: #383b42;
  justify-content: center;
  gap: 8px;
}

.qb-row--raw {
  height: 39px;
  padding-top: 9px;
  font-size: 12px;
  font-weight: 500;
  line-height: 16px;
}

.qb-row--opts {
  height: 40px;
  display: flex;
  align-items: center;
  padding-left: 10px;
  font-size: 12.3px;
  color: #9fa1ad;
  gap: 16px;
}

.qb-row--opts .chev {
  margin-right: -6px;
}

.qb-row--opts strong {
  font-weight: 500;
  color: #ccccdc;
}

/* right column */
.right {
  flex: 1;
  min-width: 0;
  display: flex;
  flex-direction: column;
}

.viz-picker {
  width: 384px;
  height: 32px;
  box-sizing: border-box;
  border: 1px solid #2a2d33;
  border-radius: 2px;
  background: #181b1f;
  display: flex;
}

.viz-main {
  flex: 1;
  display: flex;
  align-items: center;
  padding: 0 11px 0 8px;
  gap: 8px;
  font-weight: 500;
  color: #b4b6c2;
  border-right: 1px solid #2a2d33;
}

.viz-ico {
  width: 17px;
  height: 17px;
}

.viz-main .chev {
  margin-left: auto;
}

.viz-toggle {
  width: 34px;
  display: flex;
  align-items: center;
  justify-content: center;
}

.opts {
  flex: 1;
  min-height: 0;
  margin-top: 16px;
  background: #181b1f;
  border: 1px solid #24272c;
  border-width: 1px 0 0 1px;
}

.opts-top {
  padding: 8px 8px 16px 8px;
  display: flex;
  flex-direction: column;
  gap: 8px;
}

.search {
  height: 32px;
  box-sizing: border-box;
  border: 1px solid #2a2d33;
  background: #111217;
  padding: 0 8px;
  display: flex;
  align-items: center;
  gap: 4px;
  color: #85878f;
}

.seg--wide {
  height: 32px;
}

.seg--wide .seg-item {
  flex: 1;
}

.group {
  border-top: 1px solid #24272c;
  padding: 0 16px 0 32px;
}

.group-title {
  height: 33px;
  margin-left: -24px;
  display: flex;
  align-items: center;
  gap: 12px;
  font-weight: 500;
  color: #ccccdc;
}

.group-title--first {
  height: 31px;
}

.f-label {
  display: block;
  height: 20px;
  margin-top: 7px;
  font-size: 12px;
  font-weight: 500;
  line-height: 16px;
}

.f-label--title {
  margin-top: 8px;
}

.input {
  height: 32px;
  box-sizing: border-box;
  border: 1px solid #2a2d33;
  background: #111217;
  padding: 0 8px;
  display: flex;
  align-items: center;
}

.input--select {
  justify-content: space-between;
  color: #85878f;
  padding-left: 10px;
}

.f-label--desc {
  margin-top: 15px;
}

.textarea {
  height: 50px;
  box-sizing: border-box;
  border: 1px solid #2f3237;
  background: #111217;
  display: flex;
  align-items: flex-end;
  justify-content: flex-end;
}

.grip {
  width: 8px;
  height: 8px;
  fill: none;
  stroke: #9fa1ad;
  stroke-width: 1;
}

.f-label--transp {
  margin-top: 21px;
  height: 19px;
}

.sub {
  height: 33px;
  border-top: 1px solid #24272c;
  display: flex;
  align-items: center;
  gap: 12px;
  padding-left: 5px;
  font-weight: 500;
  color: #b8bac6;
}

.sub--first {
  margin-top: 16px;
  height: 32px;
}

.group--panel {
  height: 323px;
  box-sizing: border-box;
}

.group--tooltip {
  height: 116px;
  box-sizing: border-box;
}

.seg--radio {
  width: fit-content;
  height: 31px;
}

.seg--radio .seg-item {
  padding: 0 16px;
}

.r-single {
  width: 72px;
  box-sizing: border-box;
}

.r-list {
  width: 56px;
  box-sizing: border-box;
}

.r-bottom {
  width: 79px;
  box-sizing: border-box;
}

.f-label--mode {
  margin-top: 15px;
}

.f-label--place {
  margin-top: 16px;
}

.f-label--values {
  margin-top: 16px;
  height: 17px;
}

.f-desc {
  height: 20px;
  font-size: 12px;
  line-height: 16px;
  color: #85878f;
}
</style>
